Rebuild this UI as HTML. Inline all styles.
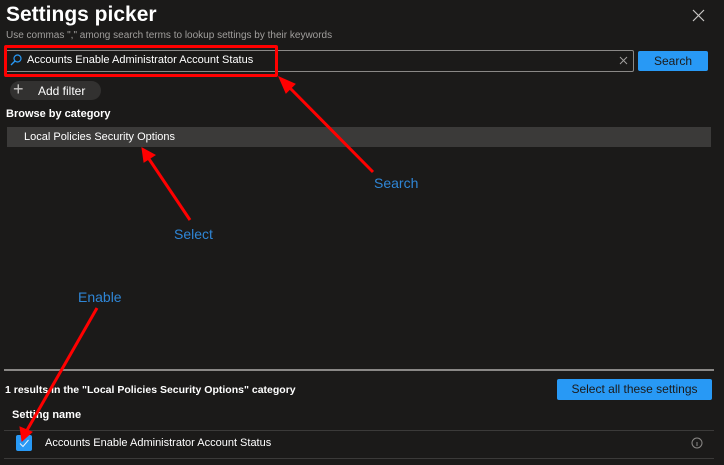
<!DOCTYPE html>
<html><head><style>
body{margin:0;width:724px;height:465px;background:#1b1a19;font-family:"Liberation Sans",sans-serif;color:#fff;position:relative;overflow:hidden}
.a{position:absolute;white-space:nowrap}
</style></head><body>
<div class="a" style="left:6px;top:3px;font-size:21px;font-weight:bold">Settings picker</div>
<div class="a" style="left:6px;top:30px;font-size:10px;color:#a19f9d">Use commas "," among search terms to lookup settings by their keywords</div>
<svg class="a" style="left:692px;top:9px" width="13" height="13"><path d="M1 1L12 12M12 1L1 12" stroke="#c8c6c4" stroke-width="1.2"/></svg>
<div class="a" style="left:5px;top:50px;width:627px;height:20px;border:1px solid #8a8886;border-radius:2px"></div>
<svg class="a" style="left:10px;top:54px" width="12" height="12"><circle cx="7.5" cy="4.5" r="3.5" fill="none" stroke="#2899f5" stroke-width="1.2"/><path d="M5 7L1 11" stroke="#2899f5" stroke-width="1.3"/></svg>
<div class="a" style="left:27px;top:54px;font-size:11px">Accounts Enable Administrator Account Status</div>
<svg class="a" style="left:619px;top:56px" width="9" height="9"><path d="M1 1L8 8M8 1L1 8" stroke="#a19f9d" stroke-width="1"/></svg>
<div class="a" style="left:638px;top:51px;width:70px;height:20px;background:#2899f5;border-radius:2px;color:#1b1a19;font-size:12px;text-align:center;line-height:20px">Search</div>
<div class="a" style="left:4px;top:45px;width:268px;height:26px;border:3px solid #f00;border-radius:2px"></div>
<div class="a" style="left:10px;top:81px;width:91px;height:19px;background:#323130;border-radius:10px"></div>
<div class="a" style="left:13px;top:79px;font-size:18px;color:#c8c6c4">+</div>
<div class="a" style="left:38px;top:84px;font-size:12px">Add filter</div>
<div class="a" style="left:6px;top:108px;font-size:11px;font-weight:bold">Browse by category</div>
<div class="a" style="left:7px;top:127px;width:704px;height:20px;background:#3b3a39"></div>
<div class="a" style="left:24px;top:131px;font-size:11px">Local Policies Security Options</div>
<div class="a" style="left:374px;top:175px;font-size:14px;color:#2f86d6">Search</div>
<div class="a" style="left:174px;top:226px;font-size:14px;color:#2f86d6">Select</div>
<div class="a" style="left:78px;top:289px;font-size:14px;color:#2f86d6">Enable</div>
<div class="a" style="left:4px;top:369px;width:710px;height:2px;background:#8a8886"></div>
<div class="a" style="left:5px;top:384px;font-size:10.5px;font-weight:bold">1 results in the "Local Policies Security Options" category</div>
<div class="a" style="left:557px;top:379px;width:155px;height:21px;background:#2899f5;border-radius:2px;color:#1b1a19;font-size:12px;text-align:center;line-height:21px">Select all these settings</div>
<div class="a" style="left:12px;top:409px;font-size:11px;font-weight:bold">Setting name</div>
<div class="a" style="left:4px;top:430px;width:710px;height:1px;background:#3b3a39"></div>
<div class="a" style="left:16px;top:435px;width:16px;height:16px;background:#2899f5;border-radius:2px"></div>
<svg class="a" style="left:16px;top:435px" width="16" height="16"><path d="M4 8.5L7 11.5L12.5 5" fill="none" stroke="#e8f2fc" stroke-width="1"/></svg>
<div class="a" style="left:45px;top:437px;font-size:11px">Accounts Enable Administrator Account Status</div>
<svg class="a" style="left:691px;top:437px" width="12" height="12"><circle cx="6" cy="6" r="5" fill="none" stroke="#8a8886"/><path d="M6 5V9" stroke="#8a8886"/></svg>
<div class="a" style="left:4px;top:458px;width:710px;height:1px;background:#3b3a39"></div>
<svg class="a" style="left:0;top:0" width="724" height="465">
<g stroke="#f00" stroke-width="3" fill="#f00">
<line x1="373" y1="172" x2="286" y2="84"/><polygon points="279,77 295,84 286,93" stroke-width="1"/>
<line x1="190" y1="220" x2="147" y2="156"/><polygon points="142,148 155,155 144,162" stroke-width="1"/>
<line x1="97" y1="308" x2="26" y2="432"/><polygon points="22,441 20,427 32,432" stroke-width="1"/>
</g></svg>
</body></html>
